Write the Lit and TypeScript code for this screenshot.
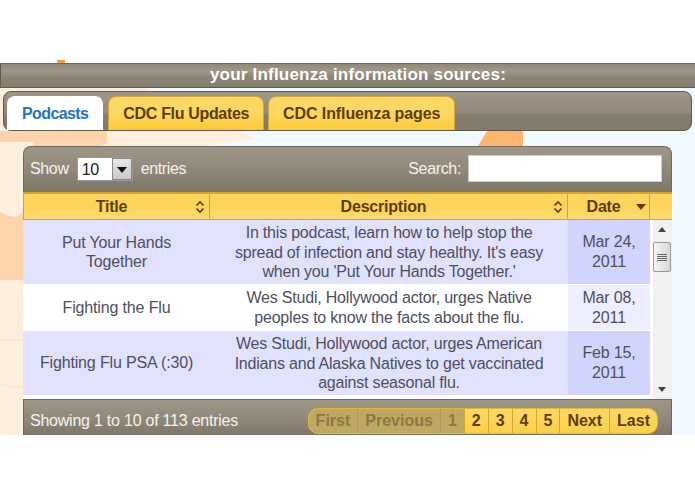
import { LitElement, html, css, svg } from "lit";
import { customElement } from "lit/decorators.js";

const rows = [
    {
        title: html`Put Your Hands<br />Together`,
        desc: html`In this podcast, learn how to help stop the<br />spread of infection and stay healthy. It's easy<br />when you 'Put Your Hands Together.'`,
        date: html`Mar 24,<br />2011`,
    },
    {
        title: html`Fighting the Flu`,
        desc: html`Wes Studi, Hollywood actor, urges Native<br />peoples to know the facts about the flu.`,
        date: html`Mar 08,<br />2011`,
    },
    {
        title: html`Fighting Flu PSA (:30)`,
        desc: html`Wes Studi, Hollywood actor, urges American<br />Indians and Alaska Natives to get vaccinated<br />against seasonal flu.`,
        date: html`Feb 15,<br />2011`,
    },
];

const sortBoth = svg`<svg class="sort" width="10" height="14" viewBox="0 0 10 14"><path d="M1.5 5.5 5 2l3.5 3.5M1.5 8.5 5 12l3.5-3.5" fill="none" stroke="#5c3d05" stroke-width="1.6"/></svg>`;
const sortDown = svg`<svg class="sort down-icon" width="10" height="6" viewBox="0 0 10 6"><path d="M0 0h10L5 6z" fill="#5c3d05"/></svg>`;

@customElement("app-root")
export class AppRoot extends LitElement {
    render() {
        return html`
            <div class="page">
                <svg class="map" width="695" height="375" viewBox="0 0 695 375">
                    <rect y="3" width="695" height="372" fill="#f2f9fe"/>
                    <path d="M0 3H150V31L238 71 256 79 240 81 222 82 208 86 190 90V375H0z" fill="#fdeedd"/>
                    <path d="M0 71H107V78Q107 86 99 86H33V82H0z" fill="#fdd3ab"/>
                    <path d="M0 152 8 156 16 157 23 153V220H0z" fill="#fdd3ab"/>
                    <path d="M57 0h8v3h-8z" fill="#f59a45"/>
                    <path d="M487 71H523L523 86H478z" fill="#fdb56f"/>
                    <path d="M0 280H23M0 325 9 326 14 328 23 326" fill="none" stroke="#f5e2cf"/>
                </svg>
                <div class="content">
                    <div class="heading">your Influenza information sources:</div>
                    <div class="tabs">
                        <a class="tab active">Podcasts</a>
                        <a class="tab second">CDC Flu Updates</a>
                        <a class="tab third">CDC Influenza pages</a>
                    </div>
                    <div class="grid">
                        <div class="toolbar">
                            <div class="length">
                                <span>Show</span>
                                <div class="select">
                                    <span class="value">10</span>
                                    <span class="arrow"></span>
                                </div>
                                <span>entries</span>
                            </div>
                            <div class="search">
                                <span>Search:</span>
                                <div class="input"></div>
                            </div>
                        </div>
                        <div class="head">
                            <div class="th c1"><span>Title</span>${sortBoth}</div>
                            <div class="th c2"><span>Description</span>${sortBoth}</div>
                            <div class="th c3"><span>Date</span>${sortDown}</div>
                        </div>
                        <div class="body">
                            <div class="rows">
                                ${rows.map(
                                    (r, i) => html`
                                        <div class="row ${i % 2 == 0 ? "odd" : "even"}">
                                            <div class="td c1">${r.title}</div>
                                            <div class="td c2">${r.desc}</div>
                                            <div class="td c3 date">${r.date}</div>
                                        </div>
                                    `
                                )}
                            </div>
                            <div class="scrollbar">
                                <span class="up"></span>
                                <div class="thumb"><i></i><i></i><i></i><i></i></div>
                                <span class="down"></span>
                            </div>
                        </div>
                        <div class="footer">
                            <span class="info">Showing 1 to 10 of 113 entries</span>
                            <div class="pager">
                                <a class="off">First</a>
                                <a class="off">Previous</a>
                                <a class="off">1</a>
                                <a>2</a>
                                <a>3</a>
                                <a>4</a>
                                <a>5</a>
                                <a>Next</a>
                                <a>Last</a>
                            </div>
                        </div>
                    </div>
                </div>
            </div>
        `;
    }
    static styles = css`
        :host {
            display: block;
            height: 494px;
            background: #fff;
            font-family: "Liberation Sans", Arial, sans-serif;
            font-size: 16px;
            overflow: hidden;
        }
        .page {
            position: relative;
            margin-top: 60px;
            width: 695px;
            height: 375px;
            overflow: hidden;
        }
        .map {
            position: absolute;
            left: 0;
            top: 0;
        }
        .content {
            position: relative;
            display: flex;
            flex-direction: column;
            padding-top: 3px;
        }
        .heading {
            height: 25px;
            box-sizing: border-box;
            padding-left: 20px;
            border-top: 1px solid #6d695c;
            border-bottom: 1px solid #5f5a4c;
            border-left: 1px solid #5f5a4c;
            line-height: 21px;
            text-align: center;
            font-weight: bold;
            color: #fff;
            font-size: 17px;
            letter-spacing: 0.2px;
            background: linear-gradient(#8f8777, #a09888 30%, #8b8373 60%, #857d6d);
        }
        .tabs {
            display: flex;
            align-items: flex-end;
            gap: 4px;
            margin: 3px 3px 0 3px;
            padding: 0 0 0 3px;
            border: 1px solid #5f5a4c;
            border-radius: 8px;
            box-sizing: border-box;
            height: 40px;
            background: linear-gradient(#9e9686, #94897a 55%, #857d6d 60%, #827a6a);
        }
        .tab {
            height: 34px;
            box-sizing: border-box;
            line-height: 33px;
            padding: 0 14px;
            border: 1px solid #d5a63b;
            border-bottom: none;
            border-radius: 8px 8px 0 0;
            font-weight: bold;
            color: #5c3d05;
            background: linear-gradient(#fed966, #fdd75f 55%, #fcc935);
        }
        .tab.active {
            background: #fff;
            color: #1f75b9;
            border-color: #fff;
            margin-right: 1px;
            letter-spacing: -0.6px;
        }
        .tab.second {
            letter-spacing: -0.33px;
        }
        .tab.third {
            letter-spacing: -0.1px;
        }
        .grid {
            width: 649px;
            margin: 15px 0 0 23px;
            display: flex;
            flex-direction: column;
        }
        .toolbar {
            height: 46px;
            box-sizing: border-box;
            padding: 0 9px 2px 6px;
            display: flex;
            align-items: center;
            justify-content: space-between;
            color: #f4f3ee;
            letter-spacing: -0.35px;
            border: 1px solid #6d695c;
            border-bottom: none;
            border-radius: 8px 8px 0 0;
            background: linear-gradient(#9e9686, #90887a 50%, #7e7666);
        }
        .length,
        .search {
            display: flex;
            align-items: center;
        }
        .select {
            display: flex;
            margin: 0 8px 0 8px;
            width: 56px;
            height: 24px;
            box-sizing: border-box;
            background: #fff;
            border: 1px solid #9a9a9a;
        }
        .value {
            flex: 1;
            padding-left: 4px;
            line-height: 23px;
            color: #222;
        }
        .arrow {
            position: relative;
            width: 20px;
            border: 1px solid #888;
            background: linear-gradient(#e8e8e8, #c8c8c8);
            box-sizing: border-box;
        }
        .arrow::after {
            content: "";
            position: absolute;
            left: 4px;
            top: 8px;
            border: 5px solid transparent;
            border-top: 6px solid #111;
            border-bottom: none;
        }
        .search span {
            margin-right: 7px;
        }
        .input {
            width: 194px;
            height: 27px;
            background: #fff;
            border: 1px solid #ccc;
            box-sizing: border-box;
        }
        .head {
            display: flex;
            height: 28px;
            box-sizing: border-box;
            border-top: 2px solid #d8a52c;
            border-bottom: 1px solid #d8a52c;
            background: linear-gradient(#fed660, #fdd35a 50%, #fddc73);
        }
        .c1 {
            width: 187px;
        }
        .c2 {
            width: 358px;
        }
        .c3 {
            width: 82px;
        }
        .th {
            position: relative;
            box-sizing: border-box;
            display: flex;
            align-items: center;
            justify-content: center;
            font-weight: bold;
            color: #5c3d05;
            letter-spacing: -0.2px;
            border-right: 1px solid #d8a52c;
            padding-right: 10px;
        }
        .th.c1 {
            border-left: 1px solid #d8a52c;
        }
        .sort {
            position: absolute;
            right: 4px;
            top: 50%;
            transform: translateY(-50%);
        }
        .sort.down-icon {
            right: 3px;
        }
        .body {
            display: flex;
            height: 179px;
            background: #fff;
            overflow: hidden;
        }
        .rows {
            width: 627px;
        }
        .row {
            display: flex;
            margin-bottom: 1px;
            color: #4f4f5f;
            line-height: 19.5px;
            text-align: center;
            letter-spacing: -0.15px;
        }
        .row.odd {
            background: #e0e2ff;
            height: 64px;
        }
        .row.even {
            height: 45px;
        }
        .row.odd .date {
            background: #d1d5fd;
        }
        .row.even .date {
            background: #edeeff;
        }
        .td {
            box-sizing: border-box;
            display: flex;
            align-items: center;
            justify-content: center;
        }
        .td.c2 {
            display: block;
            padding-top: 3px;
            letter-spacing: -0.2px;
        }
        .td.date {
            display: block;
            padding-top: 3px;
        }
        .row.odd .td.date {
            padding-top: 12px;
        }
        .scrollbar {
            position: relative;
            flex: 1;
            margin-left: 3px;
            background: #f1f1f1;
        }
        .up,
        .down {
            position: absolute;
            left: 5px;
            border: 4px solid transparent;
        }
        .up {
            top: 7px;
            border-bottom: 5px solid #444;
            border-top: none;
        }
        .down {
            bottom: 7px;
            border-top: 5px solid #444;
            border-bottom: none;
        }
        .thumb {
            position: absolute;
            left: 0;
            top: 22px;
            width: 18px;
            height: 30px;
            box-sizing: border-box;
            border: 1px solid #9a9a9a;
            border-radius: 2px;
            background: linear-gradient(90deg, #f6f6f6, #d8d8d8);
            display: flex;
            flex-direction: column;
            justify-content: center;
            gap: 1px;
            padding: 0 3px;
        }
        .thumb i {
            display: block;
            height: 1px;
            background: #666;
        }
        .footer {
            height: 36px;
            box-sizing: border-box;
            padding: 6px 13px 0 6px;
            display: flex;
            align-items: center;
            justify-content: space-between;
            color: #f4f3ee;
            border: 1px solid #6d695c;
            border-bottom: none;
            background: linear-gradient(#9e9686, #90887a 55%, #7e7666);
        }
        .info {
            letter-spacing: -0.23px;
        }
        .pager {
            display: flex;
            height: 26px;
            border-radius: 10px;
            overflow: hidden;
            box-sizing: border-box;
            border: 1px solid #e3b53a;
            font-weight: bold;
            color: #5c3d05;
            background: linear-gradient(#fed966, #fdd04a);
        }
        .pager a {
            padding: 0 7px;
            line-height: 24px;
            border-left: 1px solid #d8a52c;
        }
        .pager a:first-child {
            border-left: none;
        }
        .pager a.off {
            color: #8a7845;
            background: #bfa862;
            border-color: #b0985a;
        }
    `;
}
